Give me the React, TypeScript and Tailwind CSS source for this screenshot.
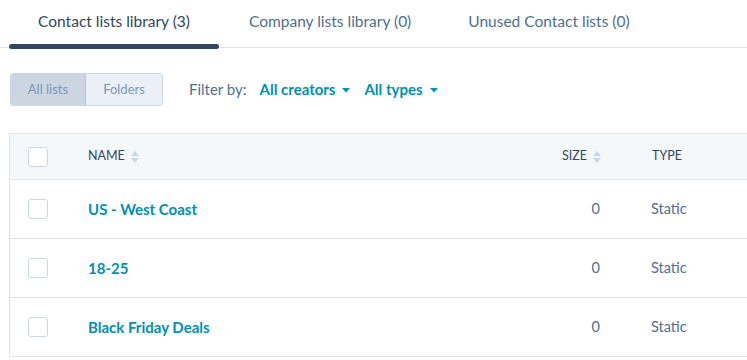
import React from "react";

const font = { fontFamily: "Lato, 'Open Sans', sans-serif" };

function Caret() {
  return (
    <svg width="8" height="5" viewBox="0 0 8 5" className="ml-[7px] mt-[1px]">
      <path d="M0 0 L8 0 L4 4.5 Z" fill="#0091ae" />
    </svg>
  );
}

function Sort() {
  return (
    <svg width="8" height="14" viewBox="0 0 8 14" className="ml-[6px]">
      <path d="M0 6 L8 6 L4 1 Z" fill="#cbd6e2" />
      <path d="M0 8 L8 8 L4 13 Z" fill="#cbd6e2" />
    </svg>
  );
}

function Checkbox() {
  return <div className="w-[20px] h-[20px] rounded-[3px] border border-[#cbd6e2] bg-white" />;
}

const rows = ["US - West Coast", "18-25", "Black Friday Deals"];

export default function App() {
  return (
    <div className="w-[747px] h-[360px] overflow-hidden bg-white" style={font}>
      {/* Tabs */}
      <div className="relative h-[48px] flex items-start border-b border-[#dfe3eb]">
        <div className="relative ml-[9px] w-[210px] h-[47px] flex justify-center pt-[10px] text-[15.5px] text-[#33475b]">
          Contact lists library (3)
          <div className="absolute left-0 right-0 bottom-[-2px] h-[5px] rounded-full bg-[#33475b]" />
        </div>
        <div className="px-[30px] pt-[10px] text-[15.5px] text-[#516f90]">Company lists library (0)</div>
        <div className="pl-[27px] pt-[10px] text-[15.5px] text-[#516f90]">Unused Contact lists (0)</div>
      </div>

      {/* Filters */}
      <div className="flex items-center h-[33px] mt-[25px] ml-[10px]">
        <div className="flex h-[33px] rounded-[3px] border border-[#cbd6e2] overflow-hidden text-[13px] text-[#7c98b6]">
          <div className="w-[75px] flex items-center justify-center bg-[#cbd6e2] border-r border-[#b7c5d4]">All lists</div>
          <div className="w-[76px] flex items-center justify-center bg-[#eaf0f6]">Folders</div>
        </div>
        <div className="ml-[26px] text-[15px] text-[#516f90]">Filter by:</div>
        <div className="ml-[13px] flex items-center text-[15px] font-bold text-[#0091ae]">
          All creators
          <Caret />
        </div>
        <div className="ml-[14px] flex items-center text-[15px] font-bold text-[#0091ae]">
          All types
          <Caret />
        </div>
      </div>

      {/* Table */}
      <div className="ml-[9px] mt-[27px] w-[760px] border-l border-t border-[#dfe3eb]">
        <div className="grid grid-cols-[78px_412px_101px_169px] h-[46px] bg-[#f5f8fa] border-b border-[#dfe3eb] items-center text-[12.5px] text-[#33475b]">
          <div className="pl-[18px]"><Checkbox /></div>
          <div className="flex items-center">NAME<Sort /></div>
          <div className="flex items-center justify-end">SIZE<Sort /></div>
          <div className="pl-[51px]">TYPE</div>
        </div>
        {rows.map((r) => (
          <div key={r} className="grid grid-cols-[78px_412px_101px_169px] h-[59px] border-b border-[#dfe3eb] items-center">
            <div className="pl-[18px]"><Checkbox /></div>
            <div className="text-[15px] font-bold text-[#0091ae]">{r}</div>
            <div className="text-right pr-[1px] text-[14.5px] text-[#516f90]">0</div>
            <div className="pl-[50px] text-[14.5px] text-[#516f90]">Static</div>
          </div>
        ))}
      </div>
    </div>
  );
}
